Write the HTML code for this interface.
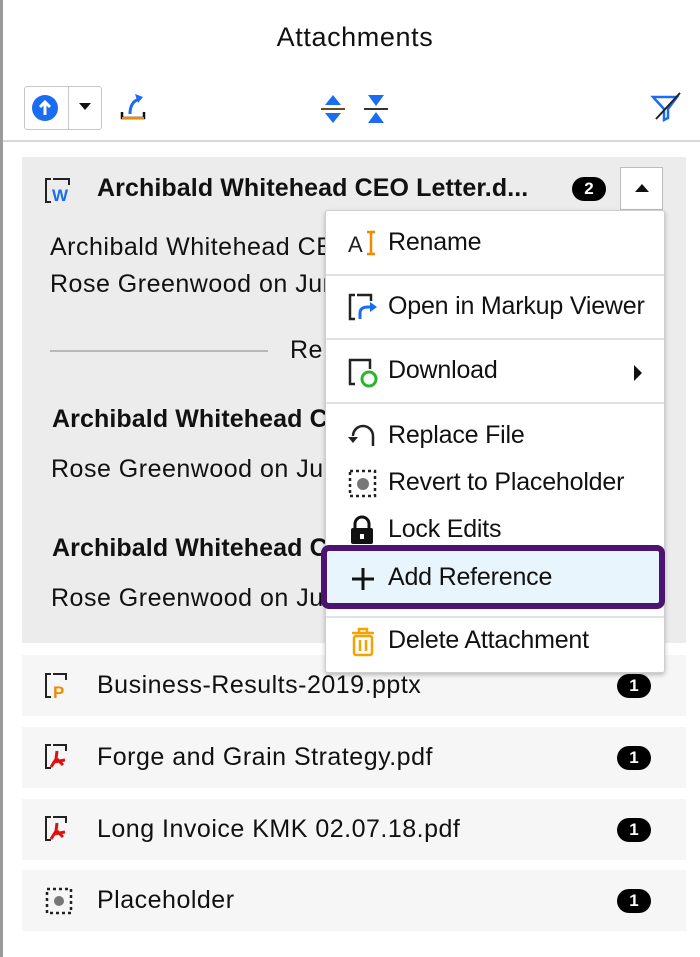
<!DOCTYPE html>
<html><head><meta charset="utf-8"><style>
*{box-sizing:border-box;margin:0;padding:0}
body{width:700px;height:957px;background:#fff;font-family:"Liberation Sans",sans-serif;color:#111;position:relative;overflow:hidden}
.abs{position:absolute}
.lb{left:0;top:0;width:3px;height:957px;background:#9a9a9a}
.title{left:0;width:710px;top:22px;text-align:center;font-size:27px;letter-spacing:0.6px}
.t{font-size:25px;white-space:nowrap;letter-spacing:0.5px}
.b{font-weight:bold;letter-spacing:0.1px}
.card{left:22px;top:157px;width:664px;height:486px;background:#ececec}
.row{left:22px;width:664px;height:61px;background:#f6f6f6}
.badge{width:34px;height:24px;border-radius:12px;background:#000;color:#fff;font-weight:bold;font-size:17px;text-align:center;line-height:24px}
.menu{left:325px;top:210px;width:340px;height:463px;background:#fff;border:1px solid #cfcfcf;box-shadow:0 2px 5px rgba(0,0,0,.25);border-radius:3px}
.sep{left:0;width:338px;height:2px;background:#e2e2e2}
.mi{left:62px;letter-spacing:-0.2px}
</style></head><body>
<div class="abs lb"></div>
<div class="abs title">Attachments</div>

<div class="abs" style="left:24px;top:86px;width:78px;height:44px;border:1px solid #c8c8c8;border-radius:3px;background:#fff"></div>
<div class="abs" style="left:68px;top:86px;width:1px;height:44px;background:#c8c8c8"></div>
<svg class="abs" style="left:30px;top:93px" width="30" height="30" viewBox="0 0 30 30"><circle cx="15" cy="15" r="13" fill="#1a6cf0"/><path d="M15 22V10M10 14l5-5 5 5" stroke="#fff" stroke-width="3" fill="none"/></svg>
<svg class="abs" style="left:78px;top:101px" width="14" height="10"><path d="M1 2h12L7 9z" fill="#111"/></svg>
<svg class="abs" style="left:118px;top:88px" width="32" height="36" viewBox="0 0 32 36"><path d="M4 24v6h22v-6" stroke="#111" stroke-width="2.5" fill="none"/><path d="M4 30h22" stroke="#f08a00" stroke-width="2"/><path d="M12 26c0-8 3-13 9-15" stroke="#1a6cf0" stroke-width="3" fill="none"/><path d="M17 6l8 3-5 6z" fill="#1a6cf0"/></svg>
<svg class="abs" style="left:320px;top:94px" width="26" height="30"><path d="M13 1l8 10H5z M13 29l8-10H5z" fill="#1a6cf0"/><path d="M1 15h24" stroke="#6b4a20" stroke-width="2"/></svg>
<svg class="abs" style="left:363px;top:94px" width="26" height="30"><path d="M5 1h16l-8 11z M5 29h16l-8-11z" fill="#1a6cf0"/><path d="M1 15h24" stroke="#333" stroke-width="2"/></svg>
<svg class="abs" style="left:650px;top:90px" width="34" height="34"><path d="M3 7h24L18 19v9l-4 2V19z" stroke="#1a6cf0" stroke-width="2.5" fill="none"/><path d="M6 29L30 3" stroke="#222" stroke-width="2"/></svg>
<div class="abs" style="left:3px;top:140px;width:697px;height:2px;background:#d8d8d8"></div>

<div class="abs card"></div>
<svg class="abs" style="left:44px;top:175px" width="30" height="30"><path d="M7 4H2v23h5" stroke="#222" stroke-width="2" fill="none"/><path d="M9 4h16v6" stroke="#222" stroke-width="2" fill="none"/><text x="8" y="26" font-family="Liberation Sans" font-weight="bold" font-size="17" fill="#1a6cf0">W</text></svg>
<div class="abs t b" style="left:97px;top:174px">Archibald Whitehead CEO Letter.d...</div>
<div class="abs badge" style="left:572px;top:177px">2</div>
<div class="abs" style="left:620px;top:167px;width:43px;height:43px;background:#fff;border:1px solid #bdbdbd"></div>
<svg class="abs" style="left:634px;top:183px" width="16" height="10"><path d="M1 9h14L8 1z" fill="#111"/></svg>

<div class="abs t" style="left:50px;top:233px">Archibald Whitehead CE</div>
<div class="abs t" style="left:50px;top:270px">Rose Greenwood on Jun</div>
<div class="abs" style="left:50px;top:350px;width:218px;height:2px;background:#b8b8b8"></div>
<div class="abs t" style="left:290px;top:336px">Re</div>
<div class="abs t b" style="left:52px;top:405px">Archibald Whitehead C</div>
<div class="abs t" style="left:51px;top:455px">Rose Greenwood on Jun</div>
<div class="abs t b" style="left:52px;top:534px">Archibald Whitehead C</div>
<div class="abs t" style="left:51px;top:584px">Rose Greenwood on Jun</div>

<div class="abs row" style="top:655px"></div>
<div class="abs row" style="top:727px"></div>
<div class="abs row" style="top:799px"></div>
<div class="abs row" style="top:870px"></div>
<svg class="abs" style="left:44px;top:672px" width="30" height="30"><path d="M7 2H2v23h5M9 2h13v6" stroke="#222" stroke-width="2" fill="none"/><text x="9" y="26" font-family="Liberation Sans" font-weight="bold" font-size="17" fill="#f08a00">P</text></svg>
<div class="abs t" style="left:97px;top:671px">Business-Results-2019.pptx</div>
<div class="abs badge" style="left:617px;top:674px">1</div>
<svg class="abs" style="left:44px;top:743px" width="30" height="30"><path d="M7 2H2v23h5M9 2h13v6" stroke="#222" stroke-width="2" fill="none"/><path d="M13 8l-1 8-5 8M13 16l6 6M10 19l11-2" stroke="#e01010" stroke-width="3" fill="none"/></svg>
<div class="abs t" style="left:97px;top:743px">Forge and Grain Strategy.pdf</div>
<div class="abs badge" style="left:617px;top:746px">1</div>
<svg class="abs" style="left:44px;top:815px" width="30" height="30"><path d="M7 2H2v23h5M9 2h13v6" stroke="#222" stroke-width="2" fill="none"/><path d="M13 8l-1 8-5 8M13 16l6 6M10 19l11-2" stroke="#e01010" stroke-width="3" fill="none"/></svg>
<div class="abs t" style="left:97px;top:815px">Long Invoice KMK 02.07.18.pdf</div>
<div class="abs badge" style="left:617px;top:818px">1</div>
<svg class="abs" style="left:45px;top:887px" width="28" height="28"><rect x="2" y="2" width="24" height="24" stroke="#222" stroke-width="2.5" stroke-dasharray="3 3" fill="none"/><circle cx="14" cy="14" r="5" fill="#777"/></svg>
<div class="abs t" style="left:97px;top:886px">Placeholder</div>
<div class="abs badge" style="left:617px;top:889px">1</div>

<div class="abs menu">
 <svg class="abs" style="left:22px;top:17px" width="34" height="30"><text x="0" y="24" font-family="Liberation Sans" font-size="22" fill="#222">A</text><path d="M19 4h8M23 4v22M19 26h8" stroke="#f08a00" stroke-width="2.5"/></svg>
 <div class="abs t mi" style="top:17px">Rename</div>
 <div class="abs sep" style="top:63px"></div>
 <svg class="abs" style="left:22px;top:80px" width="34" height="34"><path d="M7 4H2v24h5M9 4h14v6" stroke="#222" stroke-width="2.5" fill="none"/><path d="M12 28v-6c0-4 3-6 8-6h4" stroke="#1a6cf0" stroke-width="3" fill="none"/><path d="M22 11l7 5-7 5z" fill="#1a6cf0"/></svg>
 <div class="abs t mi" style="top:81px">Open in Markup Viewer</div>
 <div class="abs sep" style="top:127px"></div>
 <svg class="abs" style="left:22px;top:145px" width="34" height="34"><path d="M7 28H2V4h20v9" stroke="#222" stroke-width="2.5" fill="none"/><circle cx="21" cy="23" r="7" fill="#fff" stroke="#2bb52b" stroke-width="3"/></svg>
 <div class="abs t mi" style="top:145px">Download</div>
 <svg class="abs" style="left:307px;top:153px" width="10" height="18"><path d="M1 1l8 8-8 8z" fill="#111"/></svg>
 <div class="abs sep" style="top:191px"></div>
 <svg class="abs" style="left:22px;top:209px" width="30" height="30"><path d="M5 16a10 10 0 1 1 20 0v10" stroke="#222" stroke-width="2.5" fill="none"/><path d="M0 17l5 6 5-6z" fill="#222"/></svg>
 <div class="abs t mi" style="top:210px">Replace File</div>
 <svg class="abs" style="left:22px;top:258px" width="30" height="30"><rect x="2" y="2" width="25" height="25" stroke="#222" stroke-width="2.5" stroke-dasharray="3 3" fill="none"/><circle cx="15" cy="15" r="6" fill="#777"/></svg>
 <div class="abs t mi" style="top:257px">Revert to Placeholder</div>
 <svg class="abs" style="left:22px;top:304px" width="28" height="30"><path d="M7 13V9a7 7 0 0 1 14 0v4" stroke="#111" stroke-width="3" fill="none"/><rect x="3" y="13" width="22" height="16" rx="2" fill="#111"/><rect x="12" y="19" width="4" height="5" fill="#fff"/></svg>
 <div class="abs t mi" style="top:304px">Lock Edits</div>
 <div class="abs" style="left:-5px;top:334px;width:344px;height:64px;border:6px solid #4a1470;border-radius:8px;background:#e9f5fd"></div>
 <svg class="abs" style="left:25px;top:356px" width="24" height="24"><path d="M12 1v22M1 12h22" stroke="#111" stroke-width="3"/></svg>
 <div class="abs t mi" style="top:352px">Add Reference</div>
 <div class="abs sep" style="top:405px"></div>
 <svg class="abs" style="left:24px;top:415px" width="26" height="32"><path d="M2 7h22M9 7V3h8v4" stroke="#f5a300" stroke-width="2.5" fill="none"/><rect x="4" y="10" width="18" height="19" rx="2" stroke="#f5a300" stroke-width="2.5" fill="none"/><path d="M10 14v11M16 14v11" stroke="#f5a300" stroke-width="2.5"/></svg>
 <div class="abs t mi" style="top:415px">Delete Attachment</div>
</div>
</body></html>
